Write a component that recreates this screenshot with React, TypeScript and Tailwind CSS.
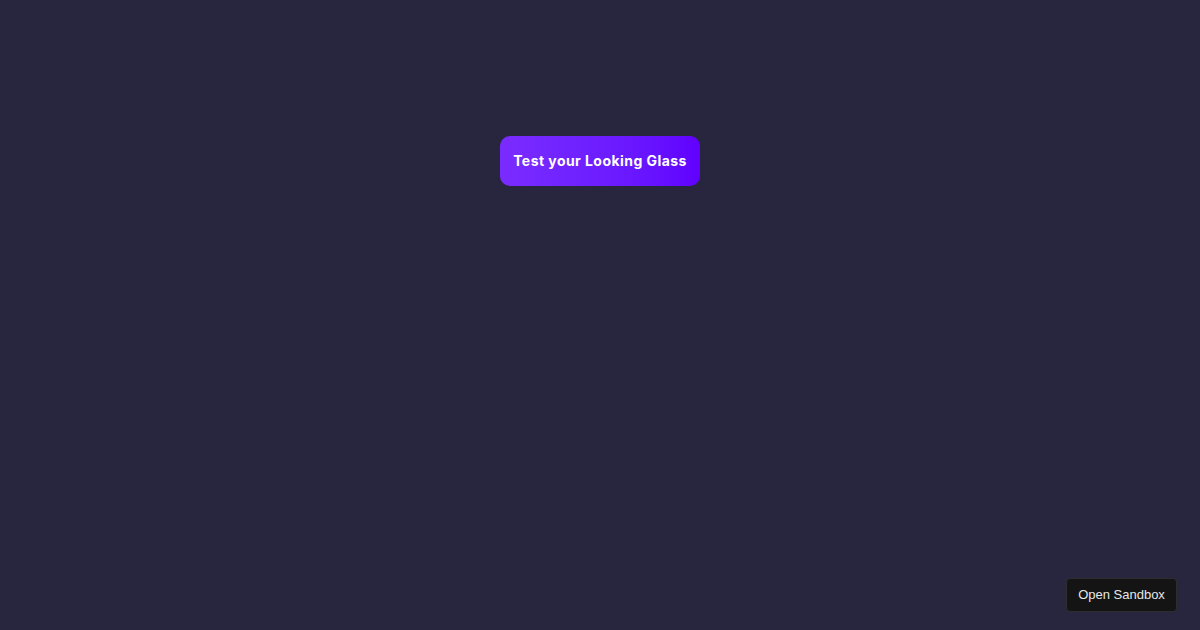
export default function App() {
  return (
    <div className="relative h-[630px] w-full bg-[#28263f] font-['Inter',sans-serif]">
      <div className="flex justify-center pt-[136px]">
        <button className="h-[50px] w-[200px] rounded-[10px] bg-gradient-to-r from-[#7a2cff] to-[#6100ff] pb-[2px] text-[14px] font-bold tracking-[0.45px] text-white">
          Test your Looking Glass
        </button>
      </div>
      <button className="absolute bottom-[18px] right-[23px] h-[34px] w-[111px] rounded-[4px] border border-[#2e2e2e] bg-[#141414] font-['Liberation_Sans',sans-serif] text-[13px] text-[#e6e6e6]">
        Open Sandbox
      </button>
    </div>
  );
}
